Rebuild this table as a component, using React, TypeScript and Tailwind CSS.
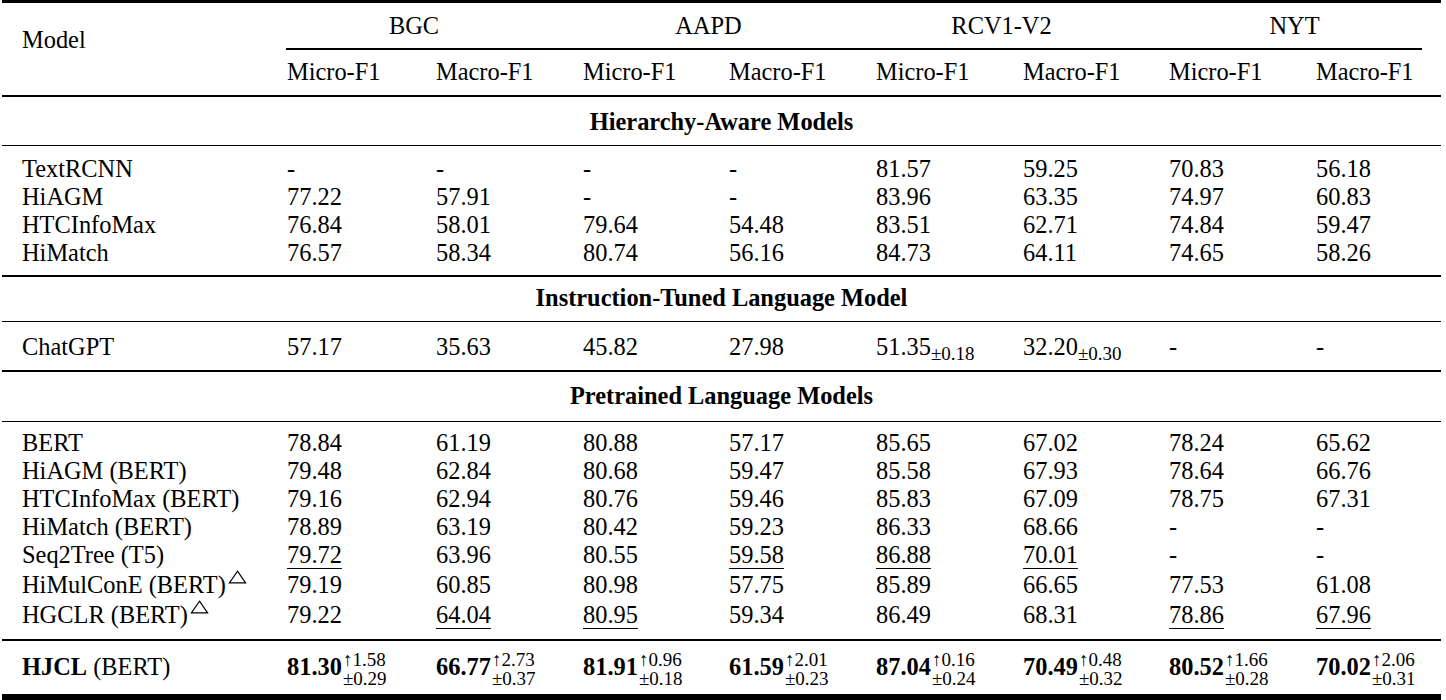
import React from 'react';

type Cell = { v: string; u?: boolean; sub?: string; up?: string; pm?: string };

const GRID =
  'grid grid-cols-[264px_149px_147px_146px_147px_147px_146px_147px_146px]';

const c = (v: string, u = false): Cell => ({ v, u });

const hierarchy: [string, Cell[]][] = [
  ['TextRCNN', ['-', '-', '-', '-', '81.57', '59.25', '70.83', '56.18'].map(v => c(v))],
  ['HiAGM', ['77.22', '57.91', '-', '-', '83.96', '63.35', '74.97', '60.83'].map(v => c(v))],
  ['HTCInfoMax', ['76.84', '58.01', '79.64', '54.48', '83.51', '62.71', '74.84', '59.47'].map(v => c(v))],
  ['HiMatch', ['76.57', '58.34', '80.74', '56.16', '84.73', '64.11', '74.65', '58.26'].map(v => c(v))],
];

const chatgpt: Cell[] = [
  c('57.17'), c('35.63'), c('45.82'), c('27.98'),
  { v: '51.35', sub: '±0.18' }, { v: '32.20', sub: '±0.30' }, c('-'), c('-'),
];

const pretrained: [string, Cell[], string, boolean?][] = [
  ['BERT', ['78.84', '61.19', '80.88', '57.17', '85.65', '67.02', '78.24', '65.62'].map(v => c(v)), 'h-[28px]'],
  ['HiAGM (BERT)', ['79.48', '62.84', '80.68', '59.47', '85.58', '67.93', '78.64', '66.76'].map(v => c(v)), 'h-[28px]'],
  ['HTCInfoMax (BERT)', ['79.16', '62.94', '80.76', '59.46', '85.83', '67.09', '78.75', '67.31'].map(v => c(v)), 'h-[28px]'],
  ['HiMatch (BERT)', ['78.89', '63.19', '80.42', '59.23', '86.33', '68.66', '-', '-'].map(v => c(v)), 'h-[28px]'],
  ['Seq2Tree (T5)', [c('79.72', true), c('63.96'), c('80.55'), c('59.58', true), c('86.88', true), c('70.01', true), c('-'), c('-')], 'h-[28px]'],
  ['HiMulConE (BERT)', ['79.19', '60.85', '80.98', '57.75', '85.89', '66.65', '77.53', '61.08'].map(v => c(v)), 'h-[32px]', true],
  ['HGCLR (BERT)', [c('79.22'), c('64.04', true), c('80.95', true), c('59.34'), c('86.49'), c('68.31'), c('78.86', true), c('67.96', true)], 'h-[28px]', true],
];

const ours: Cell[] = [
  ['81.30', '1.58', '0.29'], ['66.77', '2.73', '0.37'], ['81.91', '0.96', '0.18'], ['61.59', '2.01', '0.23'],
  ['87.04', '0.16', '0.24'], ['70.49', '0.48', '0.32'], ['80.52', '1.66', '0.28'], ['70.02', '2.06', '0.31'],
].map(([v, up, pm]) => ({ v, up, pm }));

const Triangle = () => (
  <svg width="19" height="14" viewBox="0 0 19 14" className="ml-[2px] self-start mt-[-3px]">
    <path d="M9.5 1.2 L17.6 12.8 L1.4 12.8 Z" fill="none" stroke="#000" strokeWidth="1.2" />
  </svg>
);

const Value: React.FC<{ cell: Cell }> = ({ cell }) => {
  if (cell.up) {
    return (
      <div className="flex items-center pl-[21px]">
        <span className="font-bold">{cell.v}</span>
        <span className="flex flex-col text-[19px] leading-none ml-[1px] mt-[3px]">
          <span>↑{cell.up}</span>
          <span>±{cell.pm}</span>
        </span>
      </div>
    );
  }
  return (
    <div className="flex items-center pl-[21px]">
      <span className={cell.u ? 'underline decoration-[1.3px] underline-offset-[5px]' : ''}>{cell.v}</span>
      {cell.sub && <span className="text-[19px] leading-none relative top-[6px]">{cell.sub}</span>}
    </div>
  );
};

const Rule: React.FC<{ h?: string }> = ({ h = 'h-[1.5px]' }) => <div className={`${h} bg-black w-full`} />;

const Section: React.FC<{ title: string; h: string }> = ({ title, h }) => (
  <div className={`${h} flex items-center justify-center font-bold`}>{title}</div>
);

const Row: React.FC<{ name: React.ReactNode; cells: Cell[]; h?: string }> = ({ name, cells, h = 'h-[28px]' }) => (
  <div className={`${GRID} ${h} items-center`}>
    <div className="pl-[20px] flex items-center">{name}</div>
    {cells.map((cell, i) => <Value key={i} cell={cell} />)}
  </div>
);

export default function App() {
  return (
    <div className="w-[1446px] h-[700px] bg-white overflow-hidden text-black">
      <div
        className="ml-[2px] w-[1439px] text-[24.4px] leading-none"
        style={{ fontFamily: '"Liberation Serif", "Times New Roman", serif' }}
      >
        <Rule h="h-[3px]" />

        {/* header */}
        <div className={`${GRID} grid-rows-[45px_2px_45px]`}>
          <div className="row-span-3 pl-[20px] mt-[25px]">Model</div>
          {['BGC', 'AAPD', 'RCV1-V2', 'NYT'].map(d => (
            <div key={d} className="col-span-2 flex items-center justify-center pt-[1px]">{d}</div>
          ))}
          <div className="col-start-2 col-span-8 ml-[20px] mr-[19px] self-center h-[1.2px] bg-black" />
          {['Micro-F1', 'Macro-F1', 'Micro-F1', 'Macro-F1', 'Micro-F1', 'Macro-F1', 'Micro-F1', 'Macro-F1'].map((t, i) => (
            <div key={i} className="flex items-center pl-[21px]">{t}</div>
          ))}
        </div>
        <Rule />

        <Section title="Hierarchy-Aware Models" h="h-[48px] pt-[3px]" />
        <Rule />
        <div className="pt-[9px] pb-[8px]">
          {hierarchy.map(([n, cells]) => <Row key={n} name={n} cells={cells} />)}
        </div>
        <Rule />

        <Section title="Instruction-Tuned Language Model" h="h-[44px]" />
        <Rule />
        <Row name="ChatGPT" cells={chatgpt} h="h-[48px] pt-[2px]" />
        <Rule />

        <Section title="Pretrained Language Models" h="h-[49px]" />
        <Rule />
        <div className="pt-[7px] pb-[10px]">
          {pretrained.map(([n, cells, h, tri]) => (
            <Row key={n} name={<>{n}{tri && <Triangle />}</>} cells={cells} h={h} />
          ))}
        </div>
        <Rule />

        <Row name={<><span className="font-bold">HJCL</span>&nbsp;(BERT)</>} cells={ours} h="h-[53px]" />
        <Rule h="h-[6px]" />
      </div>
    </div>
  );
}
